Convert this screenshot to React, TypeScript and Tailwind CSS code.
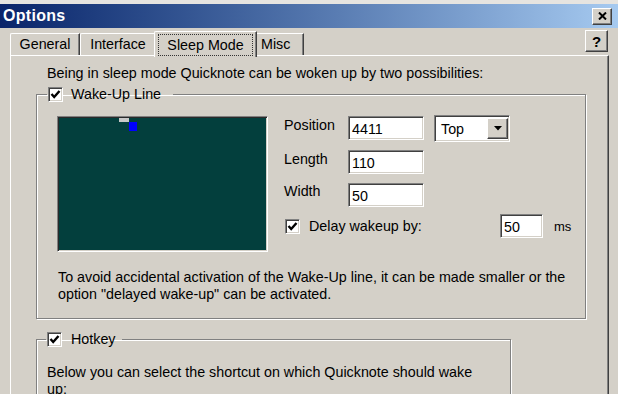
import React from "react";

function Check() {
  return (
    <span className="w-[15px] h-[15px] shrink-0 bg-white border border-t-[#808080] border-l-[#808080] border-r-white border-b-white shadow-[inset_1px_1px_0_#404040,inset_-1px_-1px_0_#d4d0c8] flex items-center justify-center">
      <svg width="11" height="11" viewBox="0 0 11 11">
        <polyline points="1.5,5 4.2,8 9.5,2" fill="none" stroke="#000" strokeWidth="2.4" />
      </svg>
    </span>
  );
}

function Field({ value, w }: { value: string; w: string }) {
  return (
    <div
      className={`${w} h-[24px] bg-white border border-t-[#808080] border-l-[#808080] border-r-white border-b-white shadow-[inset_1px_1px_0_#404040,inset_-1px_-1px_0_#d4d0c8] flex items-center pl-[3px] pt-[2px]`}
    >
      {value}
    </div>
  );
}

export default function App() {
  return (
    <div className="w-[618px] h-[394px] overflow-hidden bg-[#d4d0c8] text-black text-[14.3px] leading-[17px] font-['Liberation_Sans',Arial,sans-serif] flex flex-col">
      <div className="h-[4px] shrink-0 bg-[#e6e4e0]" />
      {/* Title bar */}
      <div className="h-[24px] shrink-0 flex items-center justify-between bg-gradient-to-r from-[#0a246a] to-[#a6caf0] pl-[3px] pr-[6px]">
        <span className="text-white font-bold text-[16px] leading-[20px] tracking-[0.3px]">Options</span>
        <button className="w-[20px] h-[17px] bg-[#d4d0c8] border border-t-white border-l-white border-r-[#404040] border-b-[#404040] shadow-[inset_-1px_-1px_0_#808080] flex items-center justify-center">
          <svg width="9" height="8" viewBox="0 0 9 8">
            <path d="M1 0.5 L8 7.5 M8 0.5 L1 7.5" stroke="#000" strokeWidth="2" />
          </svg>
        </button>
      </div>
      {/* Tab row */}
      <div className="h-[27px] shrink-0 flex justify-between pl-[10px] pr-[10px]">
        <div className="flex items-end">
          <div className="w-[70px] h-[22px] border-t border-l border-white border-r border-r-[#404040] shadow-[inset_-1px_0_0_#808080] rounded-tl-[2px] flex items-center justify-center">
            General
          </div>
          <div className="w-[76px] h-[22px] border-t border-l border-white border-r border-r-[#404040] shadow-[inset_-1px_0_0_#808080] rounded-tl-[2px] flex items-center justify-center">
            Interface
          </div>
          <div className="relative z-10 -mx-[2px] -mb-[2px] w-[103px] h-[26px] bg-[#d4d0c8] border-t border-l border-white border-r border-r-[#404040] shadow-[inset_-1px_0_0_#808080] rounded-tl-[2px] flex flex-col">
            <div className="mx-[3px] mt-[2px] h-[22px] border border-dotted border-[#333] flex items-center justify-center pt-[1px]">
              Sleep Mode
            </div>
          </div>
          <div className="w-[49px] h-[22px] border-t border-l border-white border-r border-r-[#404040] shadow-[inset_-1px_0_0_#808080] rounded-tl-[2px] flex items-center pl-[5px]">
            Misc
          </div>
        </div>
        <button className="mt-[2px] w-[23px] h-[22px] bg-[#d4d0c8] border border-t-white border-l-white border-r-[#404040] border-b-[#404040] shadow-[inset_-1px_-1px_0_#808080] flex items-center justify-center font-bold text-[15px]">
          ?
        </button>
      </div>
      {/* Panel */}
      <div className="ml-[10px] w-[599px] flex-1 border-t border-l border-white border-r border-r-[#404040] shadow-[inset_-1px_0_0_#808080]">
        <div className="pl-[36px] pt-[9px]">
          Being in sleep mode Quicknote can be woken up by two possibilities:
        </div>
        <fieldset className="ml-[25px] mt-[4px] w-[550px] border border-[#808080] shadow-[inset_1px_1px_0_#fff,1px_1px_0_#fff]">
          <legend className="ml-[10px] px-[1px] flex items-center gap-[8px] pr-[12px]">
            <Check />
            <span>Wake-Up Line</span>
          </legend>
          <div className="pl-[20px] pt-[13px] pb-[15px]">
            <div className="flex">
              <div className="relative w-[211px] h-[136px] bg-[#033f3d] border border-t-[#808080] border-l-[#808080] border-r-white border-b-white shadow-[inset_1px_1px_0_#2a2a2a,inset_-1px_-1px_0_#d4d0c8]">
                <div className="absolute left-[61px] top-[1px] w-[10px] h-[4px] bg-[#c8c8c8]" />
                <div className="absolute left-[71px] top-[5px] w-[8px] h-[9px] bg-[#0000ff]" />
              </div>
              <div className="ml-[16px] flex flex-col">
                <div className="flex items-start">
                  <span className="w-[64px] mt-[1px]">Position</span>
                  <Field value="4411" w="w-[76px]" />
                  <div className="ml-[10px] -mt-[1px] w-[76px] h-[27px] bg-white border border-t-[#808080] border-l-[#808080] border-r-white border-b-white shadow-[inset_1px_1px_0_#404040,inset_-1px_-1px_0_#d4d0c8] flex items-stretch p-[2px] pr-[1px]">
                    <span className="flex-1 flex items-center pl-[4px] pt-[2px]">Top</span>
                    <span className="w-[21px] bg-[#d4d0c8] border border-t-white border-l-white border-r-[#404040] border-b-[#404040] shadow-[inset_-1px_-1px_0_#808080] flex items-center justify-center">
                      <svg width="8" height="5" viewBox="0 0 8 5">
                        <path d="M0 0 H8 L4 4.5 Z" fill="#000" />
                      </svg>
                    </span>
                  </div>
                </div>
                <div className="flex items-start mt-[8px]">
                  <span className="w-[64px] mt-[1px]">Length</span>
                  <Field value="110" w="w-[76px]" />
                </div>
                <div className="flex items-start mt-[9px]">
                  <span className="w-[64px]">Width</span>
                  <Field value="50" w="w-[76px]" />
                </div>
                <div className="flex items-center mt-[7px]">
                  <span className="ml-[1px]">
                    <Check />
                  </span>
                  <span className="ml-[9px] w-[191px]">Delay wakeup by:</span>
                  <Field value="50" w="w-[43px]" />
                  <span className="ml-[11px] text-[13px]">ms</span>
                </div>
              </div>
            </div>
            <p className="mt-[17px] pl-[1px] w-[524px]">
              {'To avoid accidental activation of the Wake-Up line, it can be made smaller or the option "delayed wake-up" can be activated.'}
            </p>
          </div>
        </fieldset>
        <fieldset className="ml-[25px] mt-[12px] w-[475px] h-[120px] border border-[#808080] shadow-[inset_1px_1px_0_#fff,1px_1px_0_#fff]">
          <legend className="ml-[9px] px-[1px] flex items-center gap-[9px] pr-[6px]">
            <Check />
            <span>Hotkey</span>
          </legend>
          <p className="pl-[10px] pt-[16px] w-[455px]">
            Below you can select the shortcut on which Quicknote should wake up:
          </p>
        </fieldset>
      </div>
    </div>
  );
}
